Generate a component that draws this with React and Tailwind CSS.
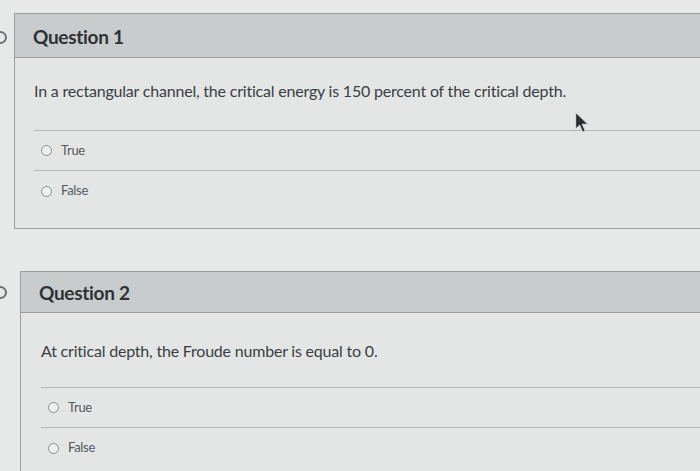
import React from "react";

function Radio() {
  return (
    <span className="inline-block w-[11px] h-[11px] rounded-full border-[1.5px] border-[#8a8d8f] bg-[#eef0f0] shrink-0" />
  );
}

function Option({ label, divider }) {
  return (
    <div className={"flex items-center gap-[9px] h-[40px] pl-[7px] " + (divider ? "border-b border-[#b4b7b8]" : "")}>
      <Radio />
      <span className="text-[13px] text-[#55595c] tracking-[-0.3px]">{label}</span>
    </div>
  );
}

function Marker({ top }) {
  return (
    <div className={"absolute left-[-6px] w-[13px] h-[13px] rounded-full border-2 border-[#6f7275] " + top} />
  );
}

export default function App() {
  return (
    <div
      className="relative w-[700px] h-[471px] overflow-hidden bg-[#e7e9e9]"
      style={{ fontFamily: "Lato, 'Open Sans', sans-serif" }}
    >
      <Marker top="top-[31px]" />
      <Marker top="top-[286px]" />

      {/* Question 1 */}
      <div className="ml-[14px] mt-[13px] w-[720px] border border-[#9c9fa0] bg-[#e4e6e6]">
        <div className="h-[44px] bg-[#c9cccc] border-b border-[#9c9fa0] flex items-center pl-[18px] pt-[3px]">
          <span className="text-[19px] font-bold text-[#2e3236] tracking-[-0.3px]">Question 1</span>
        </div>
        <div className="pl-[19px] pb-[17px]">
          <div className="h-[73px] border-b border-[#b4b7b8] flex items-center pb-[6px]">
            <span className="text-[16px] text-[#3a3e42] tracking-[-0.2px]">
              In a rectangular channel, the critical energy is 150 percent of the critical depth.
            </span>
          </div>
          <Option label="True" divider />
          <Option label="False" />
        </div>
      </div>

      {/* Question 2 */}
      <div className="ml-[20px] mt-[42px] w-[720px] border border-[#9c9fa0] bg-[#e4e6e6]">
        <div className="h-[41px] bg-[#c9cccc] border-b border-[#9c9fa0] flex items-center pl-[18px] pt-[2px]">
          <span className="text-[19px] font-bold text-[#2e3236] tracking-[-0.3px]">Question 2</span>
        </div>
        <div className="pl-[20px] pb-[22px]">
          <div className="h-[75px] border-b border-[#b4b7b8] flex items-center pt-[2px]">
            <span className="text-[16px] text-[#3a3e42] tracking-[-0.2px]">
              At critical depth, the Froude number is equal to 0.
            </span>
          </div>
          <Option label="True" divider />
          <Option label="False" />
        </div>
      </div>

      {/* mouse cursor */}
      <svg className="absolute left-[574px] top-[111px]" width="17" height="23" viewBox="0 0 14 20">
        <path d="M1 1 L1 16 L4.5 12.5 L7 18.5 L9.5 17.5 L7 11.5 L12 11.5 Z" fill="#2a2c2e" stroke="#d8dada" strokeWidth="1" strokeLinejoin="round" />
      </svg>
    </div>
  );
}
